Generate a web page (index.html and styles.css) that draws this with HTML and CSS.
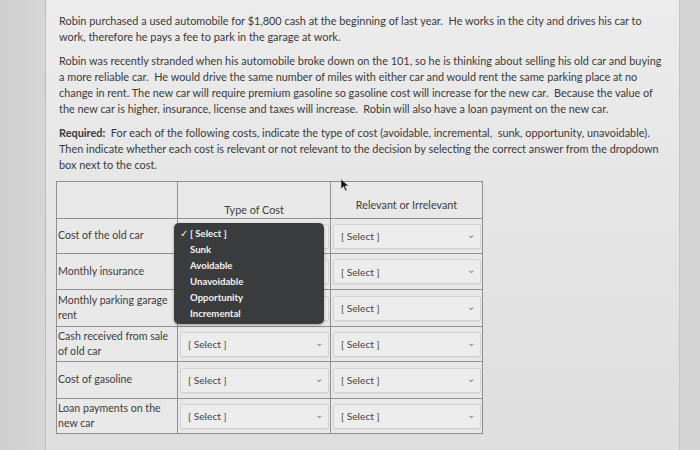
FILE: index.html
```html
<!DOCTYPE html>
<html>
<head>
<meta charset="utf-8">
<link rel="stylesheet" href="styles.css">
</head>
<body>
<div class="panel">
  <p class="para">Robin purchased a used automobile for $1,800 cash at the beginning of last year.&nbsp; He works in the city and drives his car to<br>work, therefore he pays a fee to park in the garage at work.</p>
  <p class="para">Robin was recently stranded when his automobile broke down on the 101, so he is thinking about selling his old car and buying<br>a more reliable car.&nbsp; He would drive the same number of miles with either car and would rent the same parking place at no<br>change in rent. The new car will require premium gasoline so gasoline cost will increase for the new car.&nbsp; Because the value of<br>the new car is higher, insurance, license and taxes will increase.&nbsp; Robin will also have a loan payment on the new car.</p>
  <p class="para"><b>Required:</b>&nbsp; For each of the following costs, indicate the type of cost (avoidable, incremental,&nbsp; sunk, opportunity, unavoidable).<br>Then indicate whether each cost is relevant or not relevant to the decision by selecting the correct answer from the dropdown<br>box next to the cost.</p>

  <div class="table-wrap">
    <table class="grid">
      <colgroup><col class="c1"><col class="c2"><col class="c3"></colgroup>
      <tr class="head">
        <th></th>
        <th class="h-type">Type of Cost</th>
        <th class="h-rel">Relevant or Irrelevant</th>
      </tr>
      <tr class="r1">
        <td class="label">Cost of the old car</td>
        <td><div class="sel sel-hidden"></div></td>
        <td><div class="sel"><span>[ Select ]</span><span class="chev">&#8964;</span></div></td>
      </tr>
      <tr class="r2">
        <td class="label">Monthly insurance</td>
        <td><div class="sel sel-hidden"></div></td>
        <td><div class="sel"><span>[ Select ]</span><span class="chev">&#8964;</span></div></td>
      </tr>
      <tr class="r3">
        <td class="label">Monthly parking garage rent</td>
        <td><div class="sel sel-hidden"></div></td>
        <td><div class="sel"><span>[ Select ]</span><span class="chev">&#8964;</span></div></td>
      </tr>
      <tr class="r4">
        <td class="label">Cash received from sale of old car</td>
        <td><div class="sel"><span>[ Select ]</span><span class="chev">&#8964;</span></div></td>
        <td><div class="sel"><span>[ Select ]</span><span class="chev">&#8964;</span></div></td>
      </tr>
      <tr class="r5">
        <td class="label">Cost of gasoline</td>
        <td><div class="sel"><span>[ Select ]</span><span class="chev">&#8964;</span></div></td>
        <td><div class="sel"><span>[ Select ]</span><span class="chev">&#8964;</span></div></td>
      </tr>
      <tr class="r6">
        <td class="label">Loan payments on the new car</td>
        <td><div class="sel"><span>[ Select ]</span><span class="chev">&#8964;</span></div></td>
        <td><div class="sel"><span>[ Select ]</span><span class="chev">&#8964;</span></div></td>
      </tr>
    </table>

    <ul class="menu">
      <li class="checked"><span class="tick">&#10003;</span>[ Select ]</li>
      <li>Sunk</li>
      <li>Avoidable</li>
      <li>Unavoidable</li>
      <li>Opportunity</li>
      <li>Incremental</li>
    </ul>

    <svg class="cursor" width="10" height="14" viewBox="0 0 10 14"><path d="M1 1 L1 11 L3.5 8.6 L5.5 13 L7 12.3 L5 8 L8.5 8 Z" fill="#111" stroke="#ddd" stroke-width="0.6"/></svg>
  </div>
</div>
</body>
</html>
```
FILE: styles.css
```css
html, body {
  margin: 0;
  padding: 0;
}
body {
  width: 700px;
  height: 450px;
  overflow: hidden;
  background: linear-gradient(90deg, #cfcfcf 0px, #d6d6d6 45px, #d4d4d4 100%);
  font-family: Lato, "Open Sans", sans-serif;
  color: #3a3a3a;
}
.panel {
  margin-left: 45px;
  width: 635px;
  height: 450px;
  box-sizing: border-box;
  padding: 13px 0 0 13px;
  border-left: 1px solid #bdbdbd;
  border-right: 1px solid #c4c4c4;
  background: linear-gradient(180deg, #ececec 0%, #e6e6e6 40%, #dedede 100%);
}
.para {
  margin: 0 0 8px 0;
  font-size: 10.9px;
  line-height: 16px;
  white-space: nowrap;
}
.para b {
  font-weight: 700;
}
.table-wrap {
  position: relative;
  margin-left: -3px;
  margin-top: 7px;
  width: 426px;
}
.grid {
  border-collapse: collapse;
  table-layout: fixed;
  width: 426px;
  background: #e8e8e8;
}
.c1 { width: 121px; }
.c2 { width: 153px; }
.c3 { width: 152px; }
.grid th, .grid td {
  border: 1px solid #8f8f8f;
  padding: 0;
}
.grid th {
  font-weight: 400;
  font-size: 10.8px;
  color: #3d3d3d;
}
.head { height: 37px; }
.h-type {
  vertical-align: bottom;
  padding-bottom: 2px !important;
}
.h-rel {
  vertical-align: top;
  padding-top: 16px !important;
}
.r1 { height: 35px; }
.r2 { height: 36px; }
.r3 { height: 37px; }
.r4 { height: 35px; }
.r5 { height: 37px; }
.r6 { height: 35px; }
.label {
  font-size: 10.6px;
  line-height: 15.5px;
  padding: 0 1px !important;
  color: #3c3c3c;
  vertical-align: middle;
}
.sel {
  margin: 0 1px 0 2px;
  height: 25px;
  box-sizing: border-box;
  border: 1px solid #d2d2d2;
  border-radius: 2px;
  background: #ececec;
  box-shadow: 0 1px 1px rgba(0,0,0,0.06);
  display: flex;
  align-items: center;
  justify-content: space-between;
  padding: 0 5px 0 7px;
  font-size: 10.2px;
  color: #444;
}
.chev {
  font-size: 10px;
  color: #808080;
  line-height: 1;
  margin-top: -5px;
}
.menu {
  position: absolute;
  left: 118px;
  top: 42px;
  width: 150px;
  height: 101px;
  box-sizing: border-box;
  margin: 0;
  padding: 3px 0 0 16px;
  list-style: none;
  background: #3b3c3e;
  border-radius: 5px;
  box-shadow: 0 1px 3px rgba(0,0,0,0.35);
  color: #f2f2f2;
  font-size: 9.6px;
  font-weight: 700;
}
.menu li {
  height: 16px;
  line-height: 16px;
  position: relative;
}
.tick {
  position: absolute;
  left: -10px;
  font-weight: 400;
}
.cursor {
  position: absolute;
  left: 284px;
  top: -3px;
}
```
